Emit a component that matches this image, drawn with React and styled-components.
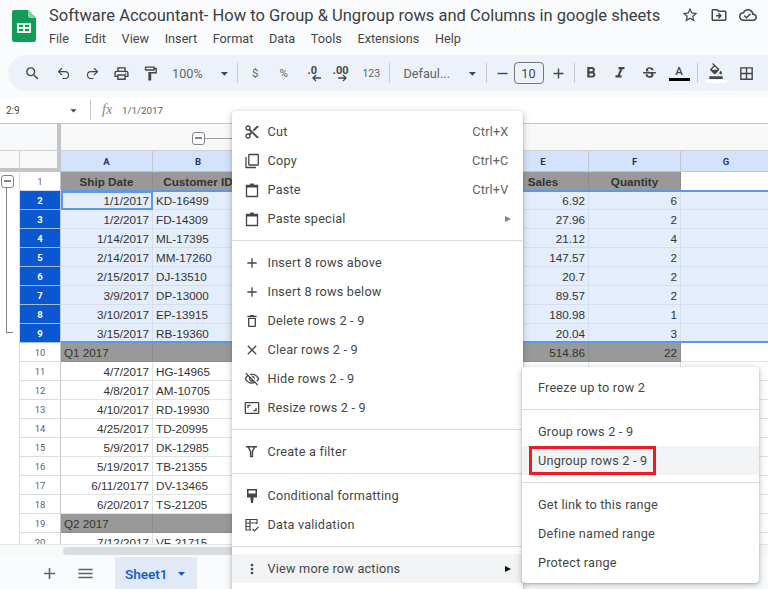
import React from 'react';
import styled, { createGlobalStyle } from 'styled-components';
import {
  MdSearch, MdOutlinePrint, MdOutlineFormatPaint, MdArrowDropDown, MdRemove, MdAdd,
  MdFormatBold, MdFormatItalic, MdStrikethroughS, MdOutlineFormatColorFill, MdBorderAll, MdStarBorder,
  MdOutlineDriveFileMove, MdOutlineCloudDone, MdMenu, MdContentCut,
  MdOutlineDelete, MdClose, MdOutlineVisibilityOff, MdOutlineAspectRatio, MdMoreVert,
} from 'react-icons/md';
import { Undo2, Redo2 } from 'lucide-react';

const COLUMNS = '19px 42px 92px 91px 127px 127px 91px 92px 91px';
const MENU_ITEMS = ['File', 'Edit', 'View', 'Insert', 'Format', 'Data', 'Tools', 'Extensions', 'Help'];

const GlobalStyle = createGlobalStyle`
  html, body {
    margin: 0;
    height: 589px;
    overflow: hidden;
    background: #fff;
  }
  * { box-sizing: border-box; }
`;

const Page = styled.div`
  position: relative;
  width: 768px;
  height: 589px;
  overflow: hidden;
  display: flex;
  flex-direction: column;
  font-family: Roboto, sans-serif;
`;

const Header = styled.header`
  height: 98px;
  background: #f9fbfd;
  display: flex;
  flex-direction: column;
  flex: none;
`;

const TitleRow = styled.div`
  height: 55px;
  display: flex;
  padding-left: 12px;
`;

const Logo = styled.svg`
  width: 24px;
  height: 32px;
  margin-top: 10px;
  flex: none;
`;

const TitleColumn = styled.div`
  margin-left: 13px;
  flex: 1;
  display: flex;
  flex-direction: column;
`;

const TitleLine = styled.div`
  display: flex;
  align-items: center;
  height: 30px;
`;

const DocTitle = styled.div`
  font-size: 16.55px;
  color: #3c4043;
  white-space: nowrap;
  width: 626px;
`;

const TitleIcon = styled.span`
  width: 29px;
  display: flex;
  justify-content: center;
  color: #444746;
  font-size: 18px;
`;

const MenuBar = styled.nav`
  display: flex;
  height: 16px;
  margin-top: 1px;
`;

const MenuLabel = styled.span`
  font-size: 12.7px;
  color: #444746;
  margin-right: 15.6px;
  line-height: 16px;
`;

const Toolbar = styled.div`
  height: 36px;
  margin-left: 8px;
  background: #edf2fa;
  border-radius: 18px 0 0 18px;
  display: flex;
  align-items: center;
  padding-left: 10px;
  color: #444746;
`;

const ToolButton = styled.span`
  width: ${(p) => p.$w || 29}px;
  margin-left: ${(p) => p.$ml || 0}px;
  flex: none;
  display: flex;
  align-items: center;
  justify-content: center;
  font-size: ${(p) => p.$size || 17}px;
  color: #444746;
`;

const ToolText = styled.span`
  font-size: ${(p) => p.$size || 11.5}px;
  color: ${(p) => p.$color || '#5f6368'};
  font-weight: ${(p) => p.$weight || 400};
`;

const Decimal = styled.span`
  position: relative;
  font-size: 11px;
  font-weight: 700;
  line-height: 11px;
  margin-top: -6px;
  color: #444746;
  svg { position: absolute; left: 4px; top: 9px; }
`;

const Divider = styled.span`
  width: 1px;
  height: 20px;
  margin-left: ${(p) => p.$ml || 0}px;
  background: #c7c7c7;
  flex: none;
`;

const DropWidget = styled.span`
  width: ${(p) => p.$w}px;
  padding-left: ${(p) => p.$pl}px;
  flex: none;
  display: flex;
  align-items: center;
  justify-content: space-between;
  font-size: 12.7px;
  color: #5f6368;
  svg { font-size: 17px; color: #444746; }
`;

const SizeBox = styled.span`
  width: 30px;
  height: 22px;
  flex: none;
  border: 1px solid #747775;
  border-radius: 4px;
  font-size: 12.7px;
  color: #444746;
  display: flex;
  align-items: center;
  justify-content: center;
`;

const ColorA = styled.span`
  display: flex;
  flex-direction: column;
  align-items: center;
  font-size: 11.5px;
  font-weight: 500;
  line-height: 12px;
  color: #444746;
  &::after {
    content: '';
    width: 21px;
    height: 3px;
    margin-top: 1px;
    background: ${(p) => p.$bar};
  }
`;

const FillIcon = styled.span`
  display: flex;
  flex-direction: column;
  align-items: center;
  font-size: 16px;
  line-height: 14px;
  &::after {
    content: '';
    width: 21px;
    height: 3px;
    margin-top: 1px;
    background: #fff;
  }
`;

const FormulaBar = styled.div`
  height: 26px;
  flex: none;
  background: #fff;
  border-bottom: 1px solid #c7c7c7;
  display: flex;
  align-items: center;
  padding-left: 6px;
  padding-bottom: 1px;
`;

const RangeName = styled.span`
  width: 60px;
  font-size: 10px;
  color: #444746;
`;

const RangeCaret = styled.span`
  width: 24px;
  display: flex;
  font-size: 15px;
  color: #444746;
`;

const FxMark = styled.span`
  margin-left: 11px;
  width: 20px;
  font-family: 'Liberation Serif', serif;
  font-style: italic;
  font-size: 14px;
  color: #80868b;
`;

const FormulaValue = styled.span`
  font-family: Roboto, sans-serif;
  font-size: 9.8px;
  color: #5f6368;
`;

const Sheet = styled.section`
  position: relative;
  flex: 1;
  min-height: 0;
  display: flex;
  flex-direction: column;
  background: #fff;
`;

const TopGutter = styled.div`
  height: 27px;
  flex: none;
  display: flex;
  background: #f8f8f8;
  border-bottom: 1px solid #d0d0d0;
`;

const TopCorner = styled.div`
  width: 61px;
  border-right: 4px solid #c4c4c4;
  background: #f8f9fa;
`;

const GridRow = styled.div`
  display: grid;
  grid-template-columns: ${COLUMNS};
  height: ${(p) => p.$h || 19}px;
  flex: none;
`;

const Gutter = styled.div`
  background: ${(p) => (p.$corner ? '#f8f9fa' : '#fff')};
  border-bottom: ${(p) => (p.$corner ? '4px solid #c4c4c4' : 'none')};
`;

const Corner = styled.div`
  background: #f8f9fa;
  border-left: 1px solid #d0d0d0;
  border-right: 4px solid #c4c4c4;
  border-bottom: 4px solid #c4c4c4;
`;

const ColHead = styled.div`
  background: #d3e3fd;
  border-right: 1px solid #c4c7c5;
  border-bottom: 1px solid #c4c7c5;
  display: flex;
  align-items: center;
  justify-content: center;
  font-size: 9.5px;
  font-weight: 700;
  color: #1f3763;
`;

const RowHead = styled.div`
  background: ${(p) => (p.$selected ? '#0b57d0' : '#fff')};
  color: ${(p) => (p.$selected ? '#fff' : '#5f6368')};
  font-weight: ${(p) => (p.$selected ? 700 : 400)};
  border-left: 1px solid #e0e0e0;
  border-right: 1px solid #c4c7c5;
  border-bottom: 1px solid ${(p) => (p.$selected ? '#9fbcea' : '#dadce0')};
  font-size: 9.5px;
  display: flex;
  align-items: center;
  justify-content: center;
`;

const Cell = styled.div`
  font-family: 'Liberation Sans', Arial, sans-serif;
  font-size: 11.7px;
  color: #333;
  padding: 0 3px;
  display: flex;
  align-items: center;
  overflow: hidden;
  white-space: nowrap;
  justify-content: ${(p) => (p.$align === 'right' ? 'flex-end' : p.$align === 'center' ? 'center' : 'flex-start')};
  font-weight: ${(p) => (p.$bold ? 700 : 400)};
  background: ${(p) => (p.$band ? '#999' : p.$selected ? '#e4edfc' : '#fff')};
  border-right: 1px solid ${(p) => (p.$band ? '#8d8d8d' : p.$selected ? '#d5dfef' : '#e2e3e3')};
  border-bottom: 1px solid ${(p) => (p.$band ? '#8d8d8d' : p.$selected ? '#d5dfef' : '#e2e3e3')};
  ${(p) => p.$active && 'outline: 2px solid #5f97e8; outline-offset: -2px;'}
`;

const RowsViewport = styled.div`
  position: relative;
  flex: 1;
  min-height: 0;
  overflow: hidden;
  display: flex;
  flex-direction: column;
`;

const SelectionEdge = styled.div`
  position: absolute;
  left: 61px;
  right: 0;
  top: 18px;
  height: 153px;
  border-top: 2px solid #5f97e8;
  border-bottom: 2px solid #5f97e8;
  pointer-events: none;
`;

const ScrollStrip = styled.div`
  height: 13px;
  flex: none;
  background: #f8f9fa;
  border-top: 1px solid #e2e3e3;
  padding: 2px 0 2px 63px;
`;

const ScrollThumb = styled.div`
  height: 8px;
  width: 600px;
  border-radius: 4px;
  background: #dadce0;
`;

const GroupBox = styled.span`
  position: absolute;
  width: 13px;
  height: 13px;
  border: 1.5px solid #80868b;
  border-radius: 3px;
  background: #fff;
  left: ${(p) => p.$x}px;
  top: ${(p) => p.$y}px;
  &::after {
    content: '';
    position: absolute;
    left: 2px;
    right: 2px;
    top: 4px;
    height: 1.5px;
    background: #80868b;
  }
`;

const GroupLineH = styled.span`
  position: absolute;
  left: 205px;
  top: 14px;
  width: 90px;
  height: 1px;
  background: #9aa0a6;
`;

const GroupBracket = styled.span`
  position: absolute;
  left: 6px;
  top: 64px;
  width: 7px;
  height: 145px;
  border-left: 1px solid #80868b;
  border-bottom: 1px solid #80868b;
`;

const TabBar = styled.footer`
  height: 32px;
  flex: none;
  background: #f9fbfd;
  display: flex;
  align-items: stretch;
  padding-left: 38px;
`;

const TabIcon = styled.span`
  width: 22px;
  margin-right: 14px;
  display: flex;
  align-items: center;
  justify-content: center;
  font-size: 19px;
  color: #5f6368;
`;

const Tab = styled.div`
  width: 82px;
  margin-left: 5px;
  background: #e1e9f7;
  display: flex;
  align-items: center;
  padding: 1px 0 0 10px;
  color: #0b57d0;
  font-size: 13.6px;
  font-weight: 500;
  svg { font-size: 17px; margin-left: 5px; }
`;

const Menu = styled.div`
  position: absolute;
  left: ${(p) => p.$x}px;
  top: ${(p) => p.$y}px;
  width: ${(p) => p.$w}px;
  min-height: ${(p) => p.$minh || 0}px;
  background: #fff;
  border-radius: 4px;
  padding: 6px 0;
  box-shadow: 0 1px 3px rgba(60, 64, 67, 0.3), 0 2px 6px 2px rgba(60, 64, 67, 0.15);
`;

const MenuItem = styled.div`
  position: relative;
  height: 29px;
  display: flex;
  align-items: center;
  padding: 0 14.5px 0 ${(p) => p.$pl || 12}px;
  font-size: 12.7px;
  letter-spacing: 0.2px;
  color: #444746;
  background: ${(p) => (p.$hover ? '#f1f3f4' : 'transparent')};
`;

const MenuIcon = styled.span`
  width: 23.5px;
  display: flex;
  font-size: 16px;
  color: #444746;
  flex: none;
`;

const Shortcut = styled.span`
  margin-left: auto;
  color: #5f6368;
`;

const Arrow = styled.span`
  margin-left: auto;
  margin-right: -2px;
  width: 0;
  height: 0;
  border-left: 6px solid ${(p) => (p.$dark ? '#111' : '#80868b')};
  border-top: 3px solid transparent;
  border-bottom: 3px solid transparent;
`;

const MenuRule = styled.div`
  height: 1px;
  margin: 7px 0;
  background: #dadce0;
`;

const RedBox = styled.span`
  position: absolute;
  left: 7px;
  top: 0;
  width: 127px;
  height: 29px;
  border: 3px solid #ed1c24;
  pointer-events: none;
`;

const SheetRow = ({ row }) => {
  const { n, date, id, sales, qty, selected, band, label } = row;
  return (
    <GridRow>
      <Gutter />
      <RowHead $selected={selected}>{n}</RowHead>
      {band ? (
        <>
          <Cell $band>{label}</Cell>
          <Cell $band />
          <Cell $band />
          <Cell $band />
          <Cell $band $align="right">{sales}</Cell>
          <Cell $band $align="right">{qty}</Cell>
          <Cell />
        </>
      ) : (
        <>
          <Cell $selected={selected} $active={n === 2} $align="right">{date}</Cell>
          <Cell $selected={selected}>{id}</Cell>
          <Cell $selected={selected} />
          <Cell $selected={selected} />
          <Cell $selected={selected} $align="right">{sales}</Cell>
          <Cell $selected={selected} $align="right">{qty}</Cell>
          <Cell $selected={selected} />
        </>
      )}
    </GridRow>
  );
};

const ROWS = [
  { n: 2, date: '1/1/2017', id: 'KD-16499', sales: '6.92', qty: '6', selected: true },
  { n: 3, date: '1/2/2017', id: 'FD-14309', sales: '27.96', qty: '2', selected: true },
  { n: 4, date: '1/14/2017', id: 'ML-17395', sales: '21.12', qty: '4', selected: true },
  { n: 5, date: '2/14/2017', id: 'MM-17260', sales: '147.57', qty: '2', selected: true },
  { n: 6, date: '2/15/2017', id: 'DJ-13510', sales: '20.7', qty: '2', selected: true },
  { n: 7, date: '3/9/2017', id: 'DP-13000', sales: '89.57', qty: '2', selected: true },
  { n: 8, date: '3/10/2017', id: 'EP-13915', sales: '180.98', qty: '1', selected: true },
  { n: 9, date: '3/15/2017', id: 'RB-19360', sales: '20.04', qty: '3', selected: true },
  { n: 10, band: true, label: 'Q1 2017', sales: '514.86', qty: '22' },
  { n: 11, date: '4/7/2017', id: 'HG-14965' },
  { n: 12, date: '4/8/2017', id: 'AM-10705' },
  { n: 13, date: '4/10/2017', id: 'RD-19930' },
  { n: 14, date: '4/25/2017', id: 'TD-20995' },
  { n: 15, date: '5/9/2017', id: 'DK-12985' },
  { n: 16, date: '5/19/2017', id: 'TB-21355' },
  { n: 17, date: '6/11/20177', id: 'DV-13465' },
  { n: 18, date: '6/20/2017', id: 'TS-21205' },
  { n: 19, band: true, label: 'Q2 2017' },
  { n: 20, date: '7/12/2017', id: 'VF-21715' },
];

const SheetsLogo = () => (
  <Logo viewBox="0 0 24 32">
    <path d="M2.2 0H16l8 8v21.800a2.200 2.200 0 0 1-2.200 2.200H2.200A2.200 2.200 0 0 1 0 29.800V2.200A2.200 2.200 0 0 1 2.200 0z" fill="#0f9d58" />
    <path d="M16 0l8 8h-6a2 2 0 0 1-2-2z" fill="#87ceac" />
    <path d="M5 13h14v10H5zm1.800 1.700v2.400h4.300v-2.400zm6.100 0v2.400h4.300v-2.400zm-6.100 4.100v2.500h4.300v-2.500zm6.100 0v2.500h4.300v-2.500z" fill="#fff" fillRule="evenodd" />
  </Logo>
);

const CopyIcon = () => (
  <svg width="16" height="16" viewBox="0 0 16 16" fill="none" stroke="#444746" strokeWidth="1.300">
    <rect x="4.800" y="1.500" width="9.500" height="10.500" rx="0.500" />
    <path d="M2 4v10.500h10" />
  </svg>
);

const PasteIcon = () => (
  <svg width="16" height="16" viewBox="0 0 16 16">
    <path d="M2.500 3.500h11v11h-11z" fill="none" stroke="#444746" strokeWidth="1.300" />
    <path d="M2.500 3h3.700V1.500h3.600V3h3.700v2.500h-11z" fill="#444746" />
  </svg>
);

const FilterIcon = () => (
  <svg width="15" height="15" viewBox="0 0 16 16" fill="none" stroke="#444746" strokeWidth="1.500">
    <path d="M2 3h12M4.500 3l2.500 5v5.500h2V8l2.500-5" />
  </svg>
);

const BrushIcon = () => (
  <svg width="16" height="16" viewBox="0 0 16 16">
    <path d="M3 1h10v8.500H9.500V11l-.5 4H7l-.5-4V9.500H3z" fill="#444746" />
    <path d="M4.500 2.500h7v3h-7z" fill="#fff" />
  </svg>
);

const ValidationIcon = () => (
  <svg width="16" height="16" viewBox="0 0 16 16" fill="none" stroke="#444746" strokeWidth="1.200">
    <path d="M13 7V2.500H2V13h5M2 6h11M6 2.500V13M2 9.500h4M8.500 12l2 2 4-4" />
  </svg>
);

const TinyArrow = ({ left }) => (
  <svg width="11" height="8" viewBox="0 0 11 8" fill="none" stroke="#444746" strokeWidth="1.300">
    {left ? <path d="M10 4H2M5 1 2 4l3 3" /> : <path d="M1 4h8M6 1l3 3-3 3" />}
  </svg>
);

export default function App() {
  return (
    <Page>
      <GlobalStyle />
      <Header>
        <TitleRow>
          <SheetsLogo />
          <TitleColumn>
            <TitleLine>
              <DocTitle>Software Accountant- How to Group &amp; Ungroup rows and Columns in google sheets</DocTitle>
              <TitleIcon><MdStarBorder /></TitleIcon>
              <TitleIcon><MdOutlineDriveFileMove /></TitleIcon>
              <TitleIcon><MdOutlineCloudDone /></TitleIcon>
            </TitleLine>
            <MenuBar>
              {MENU_ITEMS.map((m) => <MenuLabel key={m}>{m}</MenuLabel>)}
            </MenuBar>
          </TitleColumn>
        </TitleRow>
        <Toolbar>
          <ToolButton><MdSearch /></ToolButton>
          <ToolButton $ml={2}><Undo2 size={15} strokeWidth={1.8} /></ToolButton>
          <ToolButton><Redo2 size={15} strokeWidth={1.8} /></ToolButton>
          <ToolButton><MdOutlinePrint /></ToolButton>
          <ToolButton><MdOutlineFormatPaint /></ToolButton>
          <DropWidget $w={68} $pl={7}>100%<MdArrowDropDown /></DropWidget>
          <Divider $ml={4} />
          <ToolButton $w={28.5} $ml={3}><ToolText>$</ToolText></ToolButton>
          <ToolButton $w={28.5}><ToolText>%</ToolText></ToolButton>
          <ToolButton $w={28.5}><Decimal>.0<TinyArrow left /></Decimal></ToolButton>
          <ToolButton $w={28.5}><Decimal>.00<TinyArrow /></Decimal></ToolButton>
          <ToolButton $w={28.5} $ml={2}><ToolText $size={10.5}>123</ToolText></ToolButton>
          <Divider $ml={3} />
          <DropWidget $w={91} $pl={14}>Defaul...<MdArrowDropDown /></DropWidget>
          <Divider $ml={5} />
          <ToolButton $w={20} $ml={6}><MdRemove /></ToolButton>
          <ToolButton $w={1} />
          <SizeBox>10</SizeBox>
          <ToolButton $w={30}><MdAdd /></ToolButton>
          <Divider />
          <ToolButton $ml={2} $size={18}><MdFormatBold /></ToolButton>
          <ToolButton $size={18}><MdFormatItalic /></ToolButton>
          <ToolButton $size={17}><MdStrikethroughS /></ToolButton>
          <ToolButton $ml={1}><ColorA $bar="#000">A</ColorA></ToolButton>
          <Divider $ml={3} />
          <ToolButton $ml={4}><FillIcon><MdOutlineFormatColorFill /></FillIcon></ToolButton>
          <ToolButton $ml={1}><MdBorderAll /></ToolButton>
        </Toolbar>
      </Header>

      <FormulaBar>
        <RangeName>2:9</RangeName>
        <RangeCaret><MdArrowDropDown /></RangeCaret>
        <Divider />
        <FxMark>fx</FxMark>
        <FormulaValue>1/1/2017</FormulaValue>
      </FormulaBar>

      <Sheet>
        <TopGutter>
          <TopCorner />
        </TopGutter>
        <GridRow $h={21}>
          <Gutter $corner />
          <Corner />
          {['A', 'B', 'C', 'D', 'E', 'F', 'G'].map((c) => <ColHead key={c}>{c}</ColHead>)}
        </GridRow>
        <RowsViewport>
          <GridRow>
            <Gutter />
            <RowHead>1</RowHead>
            <Cell $band $bold $align="center">Ship Date</Cell>
            <Cell $band $bold $align="center">Customer ID</Cell>
            <Cell $band />
            <Cell $band />
            <Cell $band $bold $align="center">Sales</Cell>
            <Cell $band $bold $align="center">Quantity</Cell>
            <Cell />
          </GridRow>
          {ROWS.map((row) => <SheetRow key={row.n} row={row} />)}
          <SelectionEdge />
        </RowsViewport>
        <ScrollStrip><ScrollThumb /></ScrollStrip>

        <GroupBox $x={192} $y={8} />
        <GroupLineH />
        <GroupBox $x={1} $y={51} />
        <GroupBracket />
      </Sheet>

      <TabBar>
        <TabIcon><MdAdd /></TabIcon>
        <TabIcon><MdMenu /></TabIcon>
        <Tab>Sheet1<MdArrowDropDown /></Tab>
      </TabBar>

      <Menu $x={232} $y={111} $w={291} $minh={500}>
        <MenuItem><MenuIcon><MdContentCut /></MenuIcon>Cut<Shortcut>Ctrl+X</Shortcut></MenuItem>
        <MenuItem><MenuIcon><CopyIcon /></MenuIcon>Copy<Shortcut>Ctrl+C</Shortcut></MenuItem>
        <MenuItem><MenuIcon><PasteIcon /></MenuIcon>Paste<Shortcut>Ctrl+V</Shortcut></MenuItem>
        <MenuItem><MenuIcon><PasteIcon /></MenuIcon>Paste special<Arrow /></MenuItem>
        <MenuRule />
        <MenuItem><MenuIcon><MdAdd /></MenuIcon>Insert 8 rows above</MenuItem>
        <MenuItem><MenuIcon><MdAdd /></MenuIcon>Insert 8 rows below</MenuItem>
        <MenuItem><MenuIcon><MdOutlineDelete /></MenuIcon>Delete rows 2 - 9</MenuItem>
        <MenuItem><MenuIcon><MdClose /></MenuIcon>Clear rows 2 - 9</MenuItem>
        <MenuItem><MenuIcon><MdOutlineVisibilityOff /></MenuIcon>Hide rows 2 - 9</MenuItem>
        <MenuItem><MenuIcon><MdOutlineAspectRatio /></MenuIcon>Resize rows 2 - 9</MenuItem>
        <MenuRule />
        <MenuItem><MenuIcon><FilterIcon /></MenuIcon>Create a filter</MenuItem>
        <MenuRule />
        <MenuItem><MenuIcon><BrushIcon /></MenuIcon>Conditional formatting</MenuItem>
        <MenuItem><MenuIcon><ValidationIcon /></MenuIcon>Data validation</MenuItem>
        <MenuRule />
        <MenuItem $hover><MenuIcon><MdMoreVert /></MenuIcon>View more row actions<Arrow $dark /></MenuItem>
      </Menu>

      <Menu $x={522} $y={367} $w={237}>
        <MenuItem $pl={16}>Freeze up to row 2</MenuItem>
        <MenuRule />
        <MenuItem $pl={16}>Group rows 2 - 9</MenuItem>
        <MenuItem $pl={16} $hover>Ungroup rows 2 - 9<RedBox /></MenuItem>
        <MenuRule />
        <MenuItem $pl={16}>Get link to this range</MenuItem>
        <MenuItem $pl={16}>Define named range</MenuItem>
        <MenuItem $pl={16}>Protect range</MenuItem>
      </Menu>
    </Page>
  );
}
